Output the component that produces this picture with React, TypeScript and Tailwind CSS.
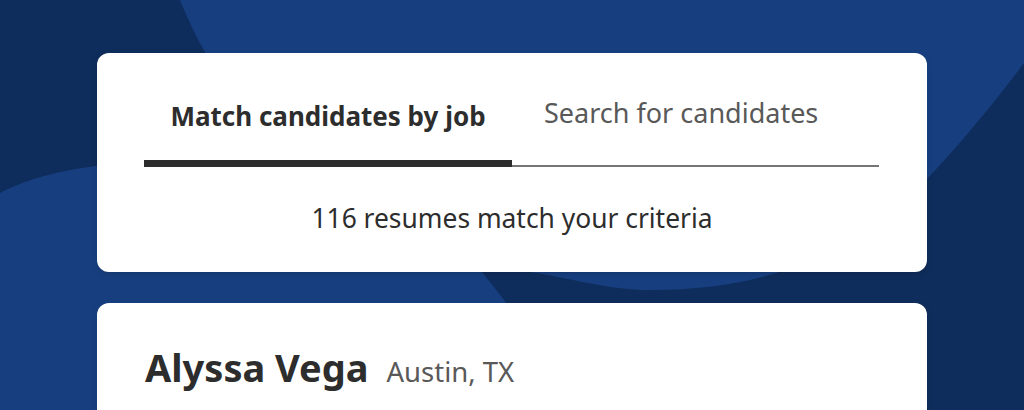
import React from "react";

function Background() {
  return (
    <svg
      className="absolute inset-0"
      width="1024"
      height="410"
      viewBox="0 0 1024 410"
      aria-hidden="true"
    >
      <rect width="1024" height="410" fill="#0f2d5c" />
      <path
        d="M180,0 C200,50 240,120 300,170 C360,225 440,262 530,272 C580,280 610,290 650,290 C700,290 740,284 780,272 C830,256 880,225 928,178 C960,144 995,102 1024,63 L1024,0 Z"
        fill="#173f80"
      />
      <path
        d="M0,193 C100,140 300,165 390,200 C430,218 460,245 482,272 C520,320 560,370 580,410 L0,410 Z"
        fill="#173f80"
      />
    </svg>
  );
}

export default function App() {
  const font = { fontFamily: '"Noto Sans", "Open Sans", Arial, sans-serif' };
  return (
    <div
      className="relative w-[1024px] h-[410px] overflow-hidden bg-[#0f2d5c]"
      style={font}
    >
      <Background />
      <div className="relative flex flex-col gap-[31px] pt-[53px] px-[97px]">
        <div className="rounded-[12px] bg-white shadow-[0_2px_6px_rgba(0,0,0,0.15)] px-[47px] pt-[48px] pb-[39px]">
          <div className="flex">
            <div className="flex w-[368px] h-[66px] flex-col items-center">
              <div className="text-[26px] leading-[30px] font-bold text-[#2d2d2d] whitespace-nowrap">
                Match candidates by job
              </div>
              <div className="mt-auto h-[7px] w-full bg-[#2d2d2d]" />
            </div>
            <div className="flex w-[367px] h-[66px] flex-col">
              <div className="pl-[32px] text-[27px] leading-[24px] text-[#595959] whitespace-nowrap">
                Search for candidates
              </div>
              <div className="mt-auto h-[2px] w-full bg-[#767676]" />
            </div>
          </div>
          <div className="mt-[36px] text-center text-[26.4px] leading-[30px] text-[#2d2d2d]">
            116 resumes match your criteria
          </div>
        </div>
        <div className="h-[200px] rounded-[12px] bg-white shadow-[0_2px_6px_rgba(0,0,0,0.15)] px-[48px] pt-[42px]">
          <div className="flex items-baseline gap-[18px]">
            <span className="text-[38px] leading-[44px] font-bold text-[#2d2d2d]">
              Alyssa Vega
            </span>
            <span className="text-[27.5px] leading-[30px] text-[#595959]">
              Austin, TX
            </span>
          </div>
        </div>
      </div>
    </div>
  );
}
